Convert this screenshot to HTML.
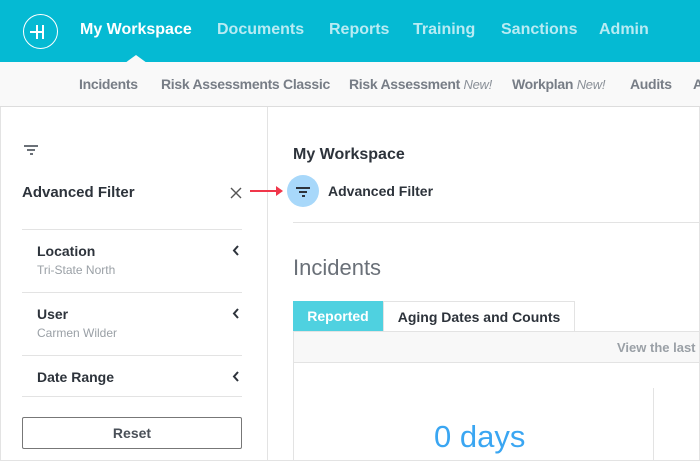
<!DOCTYPE html>
<html><head><meta charset="utf-8"><style>
*{margin:0;padding:0;box-sizing:border-box}
body{width:700px;height:461px;overflow:hidden;background:#fff;font-family:"Liberation Sans",sans-serif;position:relative;color:#2d333b}
.a{position:absolute;white-space:nowrap}
.top{position:absolute;left:0;top:0;width:700px;height:62px;background:#05bad3}
.nav{top:21px;font-size:16px;font-weight:bold;color:#b8ebf3}
.sub{position:absolute;left:0;top:62px;width:700px;height:45px;background:#f9f9f9;border-bottom:1px solid #ddd}
.si{top:76px;font-size:14px;font-weight:bold;color:#777d86;letter-spacing:-0.3px}
.si i{font-weight:normal;color:#8a9098;font-size:13px}
.hl{position:absolute;height:1px;background:#e3e3e3}
.lab{font-size:14px;font-weight:bold;color:#2d333b}
.sm{font-size:12px;color:#9aa0a6}
</style></head><body>
<div class="top"></div>
<div class="a" style="left:23px;top:14px;width:35px;height:35px;border:1.5px solid #fff;border-radius:50%"></div>
<div class="a" style="left:30px;top:31px;width:12px;height:1.5px;background:#fff"></div>
<div class="a" style="left:36px;top:25px;width:1.5px;height:14px;background:#fff"></div>
<div class="a" style="left:42px;top:25px;width:1.5px;height:14px;background:#fff"></div>
<div class="a nav" style="left:80px;color:#fff">My Workspace</div>
<div class="a nav" style="left:217px">Documents</div>
<div class="a nav" style="left:329px">Reports</div>
<div class="a nav" style="left:413px">Training</div>
<div class="a nav" style="left:501px">Sanctions</div>
<div class="a nav" style="left:599px">Admin</div>
<div class="sub"></div>
<div class="a" style="left:125px;top:55px;width:0;height:0;border-left:11px solid transparent;border-right:11px solid transparent;border-bottom:8px solid #f9f9f9"></div>
<div class="a si" style="left:79px">Incidents</div>
<div class="a si" style="left:161px">Risk Assessments Classic</div>
<div class="a si" style="left:349px">Risk Assessment <i>New!</i></div>
<div class="a si" style="left:512px">Workplan <i>New!</i></div>
<div class="a si" style="left:630px">Audits</div>
<div class="a si" style="left:693px">A</div>
<div class="a" style="left:267px;top:107px;width:1px;height:354px;background:#e3e3e3"></div>
<div class="a" style="left:0;top:107px;width:1px;height:354px;background:#e3e3e3"></div>
<div class="a" style="left:699px;top:107px;width:1px;height:354px;background:#e3e3e3"></div>
<div class="a" style="left:0;top:460px;width:700px;height:1px;background:#e3e3e3"></div>
<div class="a" style="left:24px;top:145px;width:14px;height:1.5px;background:#6b7178"></div>
<div class="a" style="left:27px;top:149px;width:8px;height:1.5px;background:#6b7178"></div>
<div class="a" style="left:30px;top:153px;width:3px;height:1.5px;background:#6b7178"></div>
<div class="a" style="left:22px;top:184px;font-size:15px;font-weight:bold">Advanced Filter</div>
<svg class="a" style="left:230px;top:187px" width="12" height="12"><path d="M1 1L11 11M11 1L1 11" stroke="#555" stroke-width="1.4"/></svg>
<div class="hl" style="left:22px;top:229px;width:220px"></div>
<div class="a lab" style="left:37px;top:243px">Location</div>
<div class="a sm" style="left:37px;top:263px">Tri-State North</div>
<svg class="a" style="left:232px;top:245px" width="8" height="12"><path d="M6 1L2 5.5L6 10" stroke="#2d333b" stroke-width="2" fill="none"/></svg>
<div class="hl" style="left:22px;top:292px;width:220px"></div>
<div class="a lab" style="left:37px;top:306px">User</div>
<div class="a sm" style="left:37px;top:326px">Carmen Wilder</div>
<svg class="a" style="left:232px;top:308px" width="8" height="12"><path d="M6 1L2 5.5L6 10" stroke="#2d333b" stroke-width="2" fill="none"/></svg>
<div class="hl" style="left:22px;top:355px;width:220px"></div>
<div class="a lab" style="left:37px;top:369px">Date Range</div>
<svg class="a" style="left:232px;top:371px" width="8" height="12"><path d="M6 1L2 5.5L6 10" stroke="#2d333b" stroke-width="2" fill="none"/></svg>
<div class="hl" style="left:22px;top:396px;width:220px"></div>
<div class="a" style="left:22px;top:417px;width:220px;height:32px;border:1px solid #777;border-radius:2px;text-align:center;line-height:30px;font-size:14px;font-weight:bold;color:#4a5058">Reset</div>
<div class="a" style="left:293px;top:146px;font-size:16px;font-weight:bold">My Workspace</div>
<div class="a" style="left:250px;top:190px;width:28px;height:1.5px;background:#f0364a"></div>
<div class="a" style="left:276px;top:186px;width:0;height:0;border-top:5px solid transparent;border-bottom:5px solid transparent;border-left:7px solid #f0364a"></div>
<div class="a" style="left:287px;top:175px;width:32px;height:32px;border-radius:50%;background:#a8d8fa"></div>
<div class="a" style="left:296px;top:187px;width:14px;height:1.5px;background:#2d333b"></div>
<div class="a" style="left:299px;top:191px;width:8px;height:1.5px;background:#2d333b"></div>
<div class="a" style="left:302px;top:195px;width:3px;height:1.5px;background:#2d333b"></div>
<div class="a" style="left:328px;top:183px;font-size:14px;font-weight:bold;color:#2d333b">Advanced Filter</div>
<div class="hl" style="left:293px;top:222px;width:407px"></div>
<div class="a" style="left:293px;top:255px;font-size:22px;color:#6a7078">Incidents</div>
<div class="a" style="left:293px;top:301px;width:90px;height:30px;background:#4fd1e0;color:#fff;font-size:14px;font-weight:bold;text-align:center;line-height:30px">Reported</div>
<div class="a" style="left:383px;top:301px;width:192px;height:31px;border:1px solid #e3e3e3;border-bottom:none;font-size:14px;font-weight:bold;text-align:center;line-height:30px;color:#2d333b">Aging Dates and Counts</div>
<div class="a" style="left:293px;top:331px;width:407px;height:32px;background:#f8f8f8;border:1px solid #e3e3e3"></div>
<div class="a" style="left:617px;top:340px;font-size:13px;font-weight:bold;color:#9aa0a6">View the last</div>
<div class="a" style="left:293px;top:362px;width:1px;height:99px;background:#e3e3e3"></div>
<div class="a" style="left:653px;top:388px;width:1px;height:73px;background:#e3e3e3"></div>
<div class="a" style="left:434px;top:419px;font-size:31px;color:#3aa6f2">0 days</div>
</body></html>
